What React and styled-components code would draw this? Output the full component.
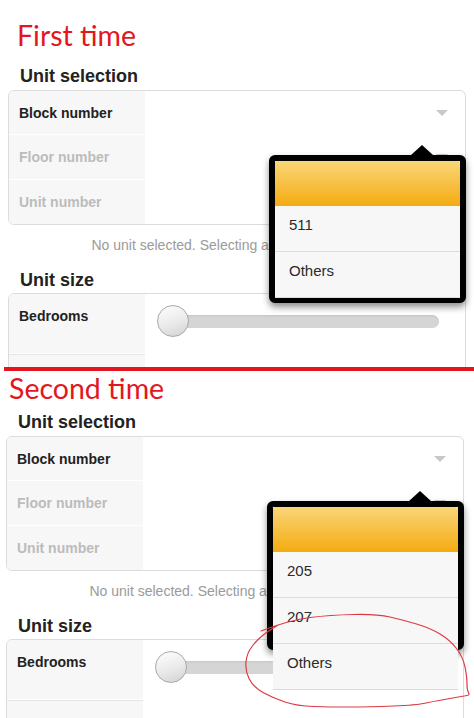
import React from 'react'
import styled, { createGlobalStyle } from 'styled-components'

const Global = createGlobalStyle`
  html, body {
    margin: 0;
    padding: 0;
    background: #fff;
  }
  body {
    width: 474px;
    height: 718px;
    overflow: hidden;
    font-family: 'Liberation Sans', Arial, sans-serif;
  }
`

const Page = styled.div`
  width: 474px;
  height: 718px;
  overflow: hidden;
  background: #fff;
`

const Shot = styled.section`
  position: relative;
  box-sizing: border-box;
  height: ${p => (p.$height ? `${p.$height}px` : 'auto')};
  overflow: hidden;
  padding-left: ${p => p.$x}px;
`

const Caption = styled.h1`
  margin: ${p => p.$top}px 0 0 ${p => p.$indent}px;
  font-family: Lato, 'Open Sans', sans-serif;
  font-weight: 400;
  font-size: 28.5px;
  line-height: 30px;
  color: #e3161e;
`

const Rule = styled.div`
  height: 4px;
  margin-left: 4px;
  background: #e3161e;
`

const Heading = styled.h2`
  margin: ${p => p.$top}px 0 0 12px;
  font-size: 18px;
  line-height: 22px;
  font-weight: bold;
  color: #222;
`

const Picker = styled.div`
  position: relative;
  width: 458px;
  margin-top: ${p => p.$top}px;
`

const Card = styled.div`
  box-sizing: border-box;
  width: 458px;
  border: 1px solid #dcdcdc;
  border-radius: 6px;
  overflow: hidden;
  background: #fff;
`

const Row = styled.div`
  display: flex;
  height: ${p => p.$h}px;
  & + & {
    border-top: 1px solid ${p => (p.$open ? 'transparent' : '#e2e2e2')};
  }
`

const Label = styled.div`
  box-sizing: border-box;
  flex: none;
  display: flex;
  align-items: ${p => (p.$top ? 'flex-start' : 'center')};
  width: 136px;
  padding: ${p => (p.$top ? '13px 0 0 10px' : '0 0 0 10px')};
  background: #f7f7f7;
  font-size: 14px;
  line-height: 18px;
  font-weight: bold;
  color: ${p => (p.$muted ? '#bcbcbc' : '#222')};
  border-top: ${p => (p.$ruled ? '1px solid #e4e4e4' : 'none')};
`

const Value = styled.div`
  flex: 1;
  display: flex;
  align-items: center;
  justify-content: flex-end;
  padding-right: 17px;
`

const Caret = styled.span`
  width: 0;
  height: 0;
  border-left: 6.5px solid transparent;
  border-right: 6.5px solid transparent;
  border-top: 6px solid #c8c8c8;
`

const Note = styled.p`
  width: 458px;
  margin: 11px 0 0;
  text-align: center;
  font-size: 14px;
  line-height: 18px;
  color: #9a9a9a;
`

const SliderCell = styled.div`
  flex: 1;
  display: flex;
  align-items: flex-start;
  padding: 11px 26px 0 12px;
`

const Slider = styled.div`
  position: relative;
  flex: 1;
  display: flex;
  align-items: center;
  height: 32px;
`

const Track = styled.div`
  flex: 1;
  height: 13px;
  margin-left: 16px;
  border-radius: 7px;
  background: #d5d5d5;
  box-shadow: inset 0 1px 2px rgba(0, 0, 0, 0.08);
`

const Thumb = styled.div`
  position: absolute;
  left: 0;
  top: 0;
  box-sizing: border-box;
  width: 32px;
  height: 32px;
  border-radius: 50%;
  border: 1px solid #a9a9a9;
  background: linear-gradient(160deg, #fefefe 0%, #eaeaea 55%, #d2d2d2 100%);
`

const Popover = styled.div`
  position: absolute;
  z-index: 5;
  top: 65px;
  left: 261px;
  box-sizing: border-box;
  width: 197px;
  height: ${p => p.$h}px;
  border: 6px solid #000;
  border-radius: 6px;
  background: #f7f7f7;
  box-shadow: 0 4px 7px rgba(0, 0, 0, 0.45);

  &::before {
    content: '';
    position: absolute;
    top: -16px;
    left: 136px;
    border-left: 11px solid transparent;
    border-right: 11px solid transparent;
    border-bottom: 10px solid #000;
  }
`

const PopHead = styled.div`
  height: 45px;
  border-radius: 2px 2px 0 0;
  background: linear-gradient(#fad679, #f4ab10);
`

const Option = styled.div`
  box-sizing: border-box;
  height: 46px;
  padding: 10px 0 0 14px;
  background: #f7f7f7;
  border-bottom: 1px solid #dcdcdc;
  font-size: 15px;
  line-height: 18px;
  color: #2a2a2a;
`

const Scribble = styled.svg`
  position: absolute;
  z-index: 9;
  left: 240px;
  top: ${p => p.$top}px;
  overflow: visible;
`

const smooth = pts => {
  let d = `M${pts[0][0]} ${pts[0][1]}`
  for (let i = 1; i < pts.length - 1; i++) {
    const [x, y] = pts[i]
    const [nx, ny] = pts[i + 1]
    d += ` Q${x} ${y} ${((x + nx) / 2).toFixed(1)} ${((y + ny) / 2).toFixed(1)}`
  }
  const last = pts[pts.length - 1]
  return d + ` L${last[0]} ${last[1]}`
}

const ringPoints = [
  [21, 23], [50, 12], [90, 7], [137, 6], [163, 12], [190, 20], [210, 32],
  [223, 49], [227, 69], [227, 82], [230, 87], [224, 88], [190, 94], [177, 97],
  [130, 99], [90, 99], [57, 98], [33, 90], [13, 79], [5, 62], [7, 45],
  [17, 32], [27, 24], [38, 17],
]

const Section = ({ title, x, height, titleTop, titleIndent, headTop, options, popHeight, ring }) => (
  <Shot $x={x} $height={height}>
    <Caption $top={titleTop} $indent={titleIndent}>{title}</Caption>
    <Heading $top={headTop}>Unit selection</Heading>
    <Picker $top={3}>
      <Card>
        <Row $h={43}>
          <Label>Block number</Label>
          <Value><Caret /></Value>
        </Row>
        <Row $h={44}>
          <Label $muted>Floor number</Label>
          <Value><Caret /></Value>
        </Row>
        <Row $h={44}>
          <Label $muted>Unit number</Label>
          <Value><Caret /></Value>
        </Row>
      </Card>
      <Popover $h={popHeight}>
        <PopHead />
        {options.map(o => <Option key={o}>{o}</Option>)}
      </Popover>
    </Picker>
    <Note>No unit selected. Selecting a unit is not a must.</Note>
    <Heading $top={15}>Unit size</Heading>
    <Picker $top={2}>
      <Card>
        <Row $h={59}>
          <Label $top>Bedrooms</Label>
          <SliderCell>
            <Slider>
              <Track />
              <Thumb />
            </Slider>
          </SliderCell>
        </Row>
        <Row $h={60} $open>
          <Label $top $ruled />
          <SliderCell />
        </Row>
      </Card>
    </Picker>
    {ring && (
      <Scribble $top={237} width="234" height="106" viewBox="0 0 234 106">
        <path d={smooth(ringPoints)} fill="none" stroke="#dc3a44" strokeWidth="1.2" strokeLinecap="round" />
      </Scribble>
    )}
  </Shot>
)

export default () => (
  <Page>
    <Global />
    <Section
      title="First time"
      x={8}
      height={367}
      titleTop={20}
      titleIndent={9}
      headTop={15}
      options={['511', 'Others']}
      popHeight={148}
    />
    <Rule />
    <Section
      title="Second time"
      x={6}
      titleTop={2}
      titleIndent={3}
      headTop={8}
      options={['205', '207', 'Others']}
      popHeight={149}
      ring
    />
  </Page>
)
